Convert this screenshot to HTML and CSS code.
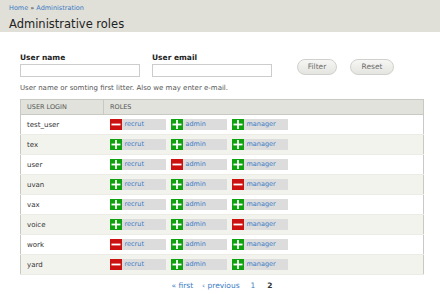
FILE: index.html
```html
<!DOCTYPE html>
<html>
<head>
<meta charset="utf-8">
<link rel="stylesheet" href="styles.css">
</head>
<body>
<div class="branding">
  <div class="breadcrumb"><a href="#">Home</a> » <a href="#">Administration</a></div>
  <h1 class="title">Administrative roles</h1>
</div>
<div class="page">
  <form class="filters">
    <div class="field">
      <label class="label">User name</label>
      <input class="text" type="text">
    </div>
    <div class="field">
      <label class="label">User email</label>
      <input class="text" type="text">
    </div>
    <div class="buttons">
      <button class="btn" type="button">Filter</button>
      <button class="btn" type="button">Reset</button>
    </div>
  </form>
  <div class="desc">User name or somting first litter. Also we may enter e-mail.</div>
  <table class="roles">
    <thead>
      <tr><th class="c1">USER LOGIN</th><th>ROLES</th></tr>
    </thead>
    <tbody id="rows"></tbody>
  </table>
  <div class="pager">
    <a href="#">« first</a>
    <a href="#">‹ previous</a>
    <a href="#">1</a>
    <span class="cur">2</span>
  </div>
</div>
<script>
var data = [
  ["test_user", 0, 1, 1],
  ["tex", 1, 1, 1],
  ["user", 1, 0, 1],
  ["uvan", 1, 1, 0],
  ["vax", 1, 1, 1],
  ["voice", 1, 1, 0],
  ["work", 0, 1, 1],
  ["yard", 0, 1, 1]
];
var names = ["recrut", "admin", "manager"];
var plus = '<svg viewBox="0 0 12 11" width="12" height="11"><rect width="12" height="11" fill="#0fa20f"/><rect x="1.5" y="4.6" width="9" height="1.8" fill="#fff"/><rect x="5.1" y="1" width="1.8" height="9" fill="#fff"/></svg>';
var minus = '<svg viewBox="0 0 12 11" width="12" height="11"><rect width="12" height="11" fill="#cc1111"/><rect x="1.5" y="4.6" width="9" height="1.8" fill="#fff"/></svg>';
var html = "";
data.forEach(function (r, i) {
  html += '<tr class="' + (i % 2 ? "even" : "odd") + '"><td class="c1">' + r[0] + '</td><td><div class="badges">';
  for (var k = 0; k < 3; k++) {
    html += '<span class="badge"><span class="ico">' + (r[k + 1] ? plus : minus) + '</span><span class="name">' + names[k] + '</span></span>';
  }
  html += '</div></td></tr>';
});
document.getElementById("rows").innerHTML = html;
</script>
</body>
</html>
```
FILE: styles.css
```css
html, body {
  margin: 0;
  padding: 0;
  background: #fff;
}
body {
  font-family: "DejaVu Sans", Verdana, sans-serif;
  font-size: 7px;
  color: #333;
}
a {
  color: #3b7bc4;
  text-decoration: none;
}
.branding {
  background: #e0dfd8;
  height: 32px;
  padding: 4px 9px 0;
  box-sizing: border-box;
}
.breadcrumb {
  font-size: 6.5px;
  line-height: 8px;
}
.title {
  margin: 5px 0 0;
  font-size: 11.5px;
  font-weight: normal;
  color: #222;
  line-height: 14px;
}
.page {
  padding: 21px 16px 0 20px;
}
.filters {
  display: flex;
  align-items: flex-start;
  margin: 0;
}
.field {
  display: flex;
  flex-direction: column;
  margin-right: 12px;
}
.label {
  font-weight: bold;
  font-size: 7.5px;
  color: #222;
  line-height: 10px;
}
.text {
  width: 120px;
  height: 13px;
  box-sizing: border-box;
  border: 1px solid #ccc;
  margin: 1px 0 0;
  padding: 0;
}
.buttons {
  display: flex;
  gap: 13px;
  margin-left: 13px;
  padding-top: 6px;
}
.btn {
  height: 16px;
  box-sizing: border-box;
  border: 1px solid #d0d0cc;
  border-radius: 9px;
  background: linear-gradient(#f6f6f4, #e4e4e0);
  color: #6d6d6d;
  font-family: "DejaVu Sans", Verdana, sans-serif;
  font-size: 7.5px;
  padding: 0;
  line-height: 14px;
  width: 40px;
}
.btn + .btn {
  width: 44px;
}
.desc {
  margin-top: 6px;
  color: #555;
  font-size: 7px;
  line-height: 10px;
}
.roles {
  margin-top: 6px;
  width: 404px;
  border-collapse: collapse;
  border: 1px solid #c9c9c3;
}
.roles th {
  background: #e1e2dc;
  height: 14px;
  padding: 0 0 0 6px;
  text-align: left;
  font-weight: normal;
  color: #555;
  font-size: 6.5px;
  border-bottom: 1px solid #c9c9c3;
}
.roles th.c1 {
  border-right: 1px solid #c9c9c3;
}
.c1 {
  width: 76px;
}
.roles td {
  height: 19px;
  padding: 0 0 0 6px;
  border-bottom: 1px solid #ecebe6;
  color: #333;
  font-size: 7px;
}
tr.even td {
  background: #f3f3ee;
}
.badges {
  display: flex;
  gap: 5px;
}
.badge {
  display: flex;
  width: 56px;
  height: 11px;
  background: #dcdcdc;
}
.ico {
  display: block;
  width: 12px;
  height: 11px;
}
.ico svg {
  display: block;
}
.name {
  padding-left: 3px;
  line-height: 11px;
  font-size: 6.5px;
  color: #3b7bc4;
}
.pager {
  display: flex;
  justify-content: center;
  gap: 9px;
  margin-top: 6px;
  font-size: 7.5px;
  line-height: 10px;
}
.pager a:nth-child(3) {
  margin-left: 2px;
  margin-right: 3px;
}
.cur {
  color: #333;
  font-weight: bold;
}
```
